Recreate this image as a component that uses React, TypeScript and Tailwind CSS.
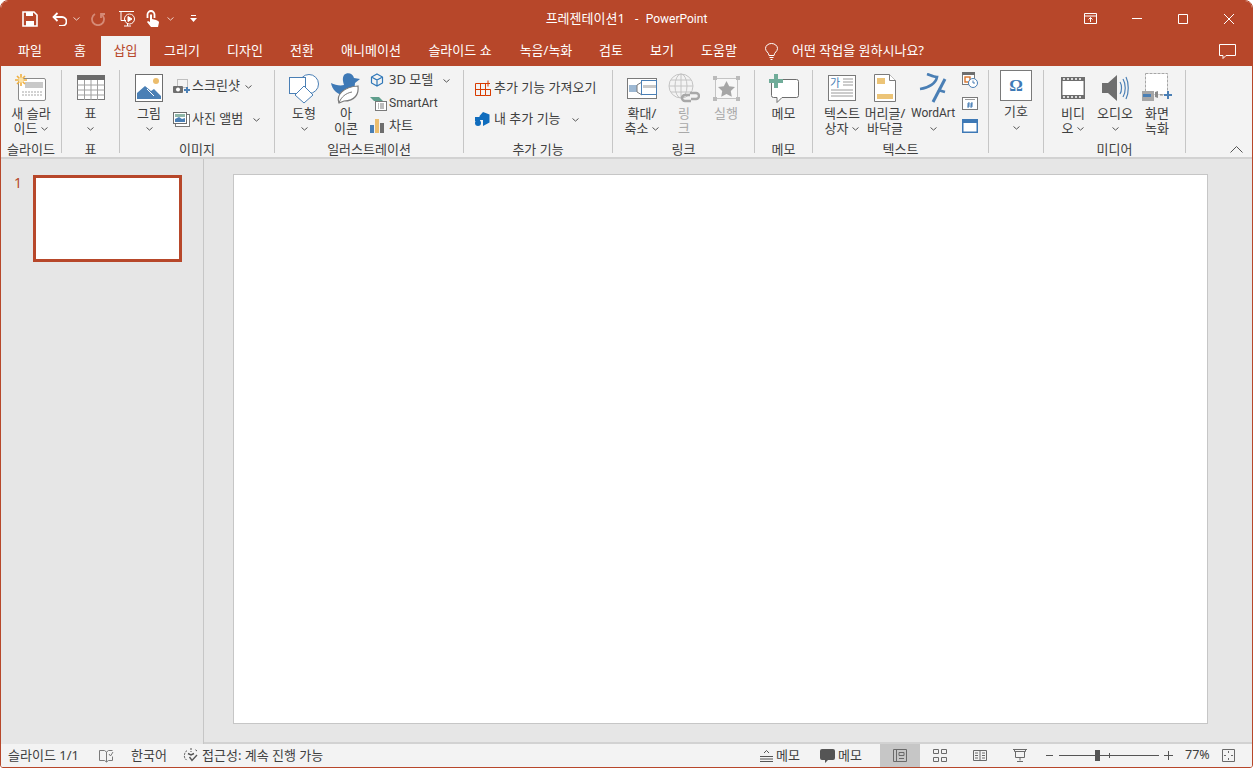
import type { ReactNode } from "react";

const BLUE = "#4a7fb5";

function Chev({ color = "#555" }: { color?: string }) {
  return (
    <svg width="7" height="4" viewBox="0 0 7 4" className="inline-block shrink-0" fill="none" stroke={color}>
      <path d="M.5.5l3 2.6 3-2.6" />
    </svg>
  );
}

function Big({ className, icon, lines, chev, disabled }: { className: string; icon: ReactNode; lines: string[]; chev?: "inline" | "below"; disabled?: boolean }) {
  return (
    <div className={`flex shrink-0 flex-col items-center ${className} ${disabled ? "text-[#a9a9a9]" : ""}`}>
      <div className="flex h-[36px] items-center justify-center">{icon}</div>
      {lines.map((line, i) => (
        <div key={line} className={`flex h-[15px] items-center gap-[4px] whitespace-nowrap leading-[15px] ${line === "WordArt" ? "font-['Roboto',sans-serif] text-[12px]" : ""}`}>
          {line}
          {chev === "inline" && i === lines.length - 1 ? <Chev /> : null}
        </div>
      ))}
      {chev === "below" ? (
        <div className="flex h-[15px] items-center">
          <Chev />
        </div>
      ) : null}
    </div>
  );
}

function Small({ icon, label, chevClass }: { icon: ReactNode; label: string; chevClass?: string }) {
  return (
    <div className="flex h-full items-center whitespace-nowrap">
      <span className="flex w-[19px] shrink-0 items-center">{icon}</span>
      <span className={label === "SmartArt" ? "font-['Roboto',sans-serif] text-[12px]" : ""}>{label}</span>
      {chevClass ? (
        <span className={chevClass}>
          <Chev />
        </span>
      ) : null}
    </div>
  );
}

function Group({ className, label, children }: { className: string; label: string; children: ReactNode }) {
  return (
    <div className={`flex h-full shrink-0 flex-col border-r border-[#c6c6c6] ${className}`}>
      <div className="flex h-[72px]">{children}</div>
      <div className="h-[13px] whitespace-nowrap text-center leading-[18px]">{label}</div>
    </div>
  );
}

const NewSlideIcon = (
  <svg width="32" height="28" viewBox="0 0 32 28">
    <rect x="3.5" y="4.5" width="27" height="22" rx="1.5" fill="#fff" stroke="#8a8a8a" />
    <rect x="10" y="8" width="18" height="6" fill="#c9c9c9" />
    <path d="M7 18h20M7 21h20" stroke="#a5a5a5" strokeDasharray="2 1" />
    <g stroke="#f0b040" strokeWidth="1.6">
      <path d="M6 0v12M0 6h12M2 2l8 8M10 2l-8 8" />
    </g>
    <circle cx="6" cy="6" r="2.6" fill="#fbe3a8" />
  </svg>
);

const TableIcon = (
  <svg width="28" height="26" viewBox="0 0 28 26">
    <rect x=".5" y=".5" width="27" height="24" fill="#fff" stroke="#7a7a7a" />
    <rect x="0" y="0" width="28" height="5" fill="#6b6b6b" />
    <path d="M.5 10h27M.5 15h27M.5 20h27M7.500 5v20M14 5v20M20.500 5v20" stroke="#a0a0a0" />
  </svg>
);

const PictureIcon = (
  <svg width="28" height="28" viewBox="0 0 28 28">
    <rect x=".5" y=".5" width="27" height="27" fill="#fff" stroke="#6e6e6e" />
    <circle cx="21" cy="7" r="3" fill="#ecbd6d" />
    <path d="M2 25v-6l8-7 6 5 3-2 7 7v3z" fill={BLUE} />
    <path d="M12 15l7 7" stroke="#fff" />
  </svg>
);

const ScreenshotIcon = (
  <svg width="17" height="15" viewBox="0 0 17 15">
    <rect x="4.5" y=".5" width="10" height="8" fill="none" stroke="#8a8a8a" strokeDasharray="1 1" />
    <rect x="0" y="7" width="10" height="7" rx="1" fill="#6e6e6e" />
    <circle cx="5" cy="10.5" r="2" fill="#fff" />
    <path d="M14 8v6M11 11h6" stroke={BLUE} strokeWidth="2" />
  </svg>
);

const AlbumIcon = (
  <svg width="17" height="15" viewBox="0 0 17 15">
    <rect x="2.5" y="2.5" width="14" height="12" fill="#fff" stroke="#7a7a7a" />
    <rect x=".5" y=".5" width="13" height="11" fill="#fff" stroke="#6e6e6e" />
    <path d="M2 2h10v3H2z" fill="#8fb6a8" />
    <path d="M2 10V7l4-2 3 2 3-1v4z" fill={BLUE} />
  </svg>
);

const ShapesIcon = (
  <svg width="30" height="31" viewBox="0 0 30 31">
    <circle cx="20" cy="11" r="9.5" fill="#fff" stroke={BLUE} />
    <rect x=".5" y="4.5" width="16" height="16" fill="#fff" stroke={BLUE} />
    <path d="M15 13l9 9-9 8-9-8z" fill="#fff" stroke={BLUE} />
  </svg>
);

const IconsIcon = (
  <svg width="30" height="31" viewBox="0 0 30 31">
    <path d="M13 2c3-3 9-2 10 3l6 1-5 4c0 7-5 12-11 12C6 22 1 16 0 10c4 2 9 3 13 2-1-4-2-7 0-10z" fill="#3e79b6" />
    <path d="M8 30c-3-8 4-16 19-17 1 8-3 15-14 15z" fill="#fff" stroke="#7a7a7a" strokeWidth="1.2" />
    <path d="M8 30c2-6 7-10 13-11" fill="none" stroke="#7a7a7a" />
  </svg>
);

const CubeIcon = (
  <svg width="14" height="14" viewBox="0 0 14 14" fill="none" stroke="#2f77b8" strokeWidth="1.2">
    <path d="M7 1l5.500 3v6L7 13l-5.500-3V4zM1.500 4L7 7l5.500-3M7 7v6" />
  </svg>
);

const SmartArtIcon = (
  <svg width="17" height="15" viewBox="0 0 17 15">
    <path d="M0 1h9l4 4H4z" fill="#5f9e8c" />
    <rect x="5.500" y="5.500" width="11" height="9" fill="#fff" stroke="#7a7a7a" />
    <path d="M8 8h1M8 10h1M8 12h1M10 8h4M10 10h4M10 12h4" stroke="#7a7a7a" />
  </svg>
);

const ChartIcon = (
  <svg width="14" height="14" viewBox="0 0 14 14">
    <rect x="0" y="6" width="4" height="8" fill={BLUE} />
    <rect x="5" y="0" width="4" height="14" fill="#ecbd6d" />
    <rect x="10" y="4" width="4" height="10" fill="#6e6e6e" />
  </svg>
);

const StoreIcon = (
  <svg width="16" height="16" viewBox="0 0 16 16" fill="none" stroke="#d83b01">
    <path d="M.5 3.500h10v12H.5zM.5 9.500h15v6h-5M5.500 3.500v12M15.500 9.500v6M13 .5v6M10 3.500h5" />
  </svg>
);

const MyAddinsIcon = (
  <svg width="15" height="14" viewBox="0 0 15 14">
    <path d="M8 0l6.500 2.500v8L8 14V8H4.500V4z" fill="#0f6cbd" />
    <circle cx="3" cy="11" r="3" fill="#0f6cbd" />
    <rect x="0" y="5" width="5" height="4" fill="#0f6cbd" />
  </svg>
);

const ZoomIcon = (
  <svg width="30" height="24" viewBox="0 0 30 24">
    <rect x=".5" y="2.500" width="29" height="20" fill="#fff" stroke="#7a7a7a" />
    <rect x="2" y="9" width="8" height="7" fill="#9db8d3" />
    <path d="M10 9l5-3v13l-5-3z" fill="#fff" stroke="#7a7a7a" />
    <rect x="14.500" y="4.500" width="15" height="14" fill="#fff" stroke={BLUE} />
    <rect x="16" y="9" width="13" height="3" fill="#c9c9c9" />
  </svg>
);

const LinkIcon = (
  <svg width="32" height="30" viewBox="0 0 32 30" fill="none" stroke="#c4c4c4">
    <circle cx="13" cy="13" r="12" fill="#f3f3f3" />
    <ellipse cx="13" cy="13" rx="6" ry="12" />
    <path d="M1 13h24M3 7h20M3 19h20M13 1v24" />
    <path d="M22 20h6a3 3 0 010 6h-5M23 28h-6a3 3 0 010-6h5" stroke="#a8a8a8" strokeWidth="2.400" />
  </svg>
);

const ActionIcon = (
  <svg width="27" height="25" viewBox="0 0 27 25">
    <rect x="2.500" y="2.500" width="22" height="20" fill="#f7f7f7" stroke="#c4c4c4" />
    <path d="M0 0h4v4H0zM23 0h4v4h-4zM0 21h4v4H0zM23 21h4v4h-4z" fill="#bbb" />
    <path d="M13.500 5l2.700 5.200 5.800.9-4.200 4 1 5.700-5.300-2.700-5.300 2.700 1-5.700-4.200-4 5.800-.9z" fill="#a6a6a6" />
  </svg>
);

const NoteIcon = (
  <svg width="31" height="29" viewBox="0 0 31 29">
    <path d="M3.500 5.500h25a2 2 0 012 2v14a2 2 0 01-2 2H14l-5 5v-5H5.500a2 2 0 01-2-2z" fill="#fff" stroke="#6e6e6e" />
    <path d="M6 0h4v5h5v4h-5v5H6V9H1V5h5z" fill="#70ac99" />
  </svg>
);

const TextBoxIcon = (
  <svg width="28" height="26" viewBox="0 0 28 26">
    <rect x=".5" y=".5" width="27" height="25" fill="#fff" stroke="#7a7a7a" />
    <text x="2" y="12" fontSize="11" fill={BLUE} fontFamily="'Noto Sans CJK KR'">가</text>
    <path d="M15 4h10M15 7h10M15 10h10M3 15h22M3 18h22M3 21h22" stroke="#9a9a9a" />
  </svg>
);

const HeaderIcon = (
  <svg width="22" height="28" viewBox="0 0 22 28">
    <path d="M.5.5h15l6 6v21H.5z" fill="#fff" stroke="#7a7a7a" />
    <path d="M15.500.5v6h6" fill="#fff" stroke="#7a7a7a" />
    <rect x="3" y="4" width="8" height="6" fill="#ecc477" />
    <rect x="3" y="20" width="16" height="5" fill="#ecc477" />
  </svg>
);

const WordArtIcon = (
  <svg width="28" height="30" viewBox="0 0 28 30" fill="none" stroke={BLUE}>
    <path d="M8 1c3 1 7 3 10 3-1 6-8 11-17 12" strokeWidth="2.600" />
    <path d="M26 6L14 29" strokeWidth="3" />
    <path d="M19 17l7 2" strokeWidth="2.600" />
  </svg>
);

const DateIcon = (
  <svg width="16" height="16" viewBox="0 0 16 16">
    <rect x=".5" y=".5" width="12" height="12" fill="#fff" stroke="#7a7a7a" />
    <rect x="0" y="0" width="13" height="3" fill="#6e6e6e" />
    <rect x="3" y="5" width="5" height="5" fill="none" stroke="#d9742b" strokeWidth="1.400" />
    <circle cx="11" cy="11" r="4.500" fill="#fff" stroke={BLUE} />
    <path d="M11 8.500V11h2" stroke={BLUE} fill="none" />
  </svg>
);

const NumberIcon = (
  <svg width="16" height="13" viewBox="0 0 16 13">
    <rect x=".5" y=".5" width="15" height="12" fill="#fff" stroke="#7a7a7a" />
    <path d="M3 2.500h10" stroke="#9a9a9a" />
    <path d="M7 5l-1 6M10 5l-1 6M5 7h6M5 9h6" stroke={BLUE} />
  </svg>
);

const ObjectIcon = (
  <svg width="16" height="14" viewBox="0 0 16 14">
    <rect x=".75" y=".75" width="14.500" height="12.500" fill="#fff" stroke="#3e79b6" strokeWidth="1.500" />
    <rect x="0" y="0" width="16" height="4" fill="#3e79b6" />
  </svg>
);

const OmegaIcon = (
  <div className="flex h-[31px] w-[32px] items-center justify-center border border-[#7a7a7a] bg-white font-['Liberation_Serif',serif] text-[17px] font-bold text-[#3e79b6]">
    Ω
  </div>
);

const VideoIcon = (
  <svg width="24" height="24" viewBox="0 0 24 24">
    <rect x="0" y="1" width="24" height="22" fill="#6e6e6e" />
    <rect x="1.500" y="5" width="21" height="14" fill="#fff" />
    <path d="M2 3h2M6 3h2M10 3h2M14 3h2M18 3h2M2 21h2M6 21h2M10 21h2M14 21h2M18 21h2" stroke="#fff" strokeWidth="1.500" />
  </svg>
);

const AudioIcon = (
  <svg width="27" height="28" viewBox="0 0 27 28" fill="none">
    <path d="M0 9h6l9-8v26l-9-8H0z" fill="#6e6e6e" />
    <path d="M18 8c2 3 2 9 0 12M21 5c3 5 3 13 0 18M24 3c3 6 3 16 0 22" stroke={BLUE} strokeWidth="1.200" />
  </svg>
);

const RecordIcon = (
  <svg width="30" height="30" viewBox="0 0 30 30">
    <rect x="3.500" y=".5" width="22" height="21" fill="#fff" stroke="#a6a6a6" strokeDasharray="3 1" />
    <rect x="0" y="18" width="12" height="10" fill="#a6a6a6" />
    <path d="M1 21h8v3H1z" fill={BLUE} />
    <path d="M13 19l3-1v7l-3-1z" fill="#8a8a8a" />
    <path d="M18 22h3" stroke="#8a8a8a" />
    <path d="M26 18v8M22 22h8" stroke={BLUE} strokeWidth="2" />
  </svg>
);

const tabs: [string, string][] = [
  ["파일", "w-[58px]"],
  ["홈", "w-[42px]"],
  ["삽입", "w-[49px]"],
  ["그리기", "w-[64px]"],
  ["디자인", "w-[62px]"],
  ["전환", "w-[52px]"],
  ["애니메이션", "w-[86px]"],
  ["슬라이드 쇼", "w-[92px]"],
  ["녹음/녹화", "w-[80px]"],
  ["검토", "w-[50px]"],
  ["보기", "w-[52px]"],
  ["도움말", "w-[62px]"],
];

function TitleBar() {
  return (
    <div className="grid h-[35px] grid-cols-[1fr_auto_1fr] items-center bg-[#b7472a] text-white">
      <div className="flex items-center pl-[21px]">
        <svg width="16" height="16" viewBox="0 0 16 16" fill="none">
          <path d="M1 1h11l3 3v11H1z" stroke="#fff" strokeWidth="1.600" />
          <rect x="4" y="1" width="7" height="4" fill="#fff" />
          <rect x="4" y="10" width="8" height="5" fill="#fff" />
        </svg>
        <svg className="ml-[14px]" width="15" height="14" viewBox="0 0 15 14" fill="none" stroke="#fff" strokeWidth="1.800">
          <path d="M5.500 1L1.500 5l4 4M2 5h8a4.500 4.500 0 010 9H7" />
        </svg>
        <span className="ml-[6px]"><Chev color="#eccfc6" /></span>
        <svg className="ml-[11px]" width="14" height="14" viewBox="0 0 14 14" fill="none" stroke="#d58a76" strokeWidth="1.800">
          <path d="M4 2a6 6 0 106 0M10 6V2h4" />
        </svg>
        <svg className="ml-[14px]" width="17" height="17" viewBox="0 0 17 17" fill="none" stroke="#fff">
          <path d="M0 1.500h15M2 1.500v9h5M5 16h7M8.500 13v3" />
          <circle cx="10.500" cy="9" r="5" />
          <path d="M9 6.500l4 2.500-4 2.500z" fill="#fff" />
        </svg>
        <svg className="ml-[10px]" width="13" height="17" viewBox="0 0 13 17">
          <path d="M1.500 8V4.500a3.500 3.500 0 017 0V8" fill="none" stroke="#fff" strokeWidth="1.800" />
          <path d="M4 4.500h2V9l4 1c1.500.5 3 1 3 2.500L12 17H5L1 12l1-1 2 1z" fill="#fff" />
        </svg>
        <span className="ml-[8px]"><Chev color="#eccfc6" /></span>
        <svg className="ml-[16px]" width="7" height="7" viewBox="0 0 7 7">
          <path d="M1 0h5v1H1zM0 3h7L3.500 7z" fill="#fff" />
        </svg>
      </div>
      <div className="flex items-center whitespace-pre text-[13px]">
        <span>프레젠테이션1</span>
        <span className="ml-[10px] text-[12px]">-</span>
        <span className="ml-[7px] font-['Roboto',sans-serif] text-[12px]">PowerPoint</span>
      </div>
      <div className="flex items-center justify-end">
        <svg className="mr-[35px]" width="13" height="11" viewBox="0 0 13 11" fill="none" stroke="#fff">
          <path d="M.5.5h12v10H.5zM.5 3h12M6.500 9V4.500M4.500 6.500l2-2 2 2" />
        </svg>
        <svg className="mr-[36px]" width="10" height="1" viewBox="0 0 10 1"><path d="M0 .5h10" stroke="#fff" /></svg>
        <svg className="mr-[36px]" width="10" height="10" viewBox="0 0 10 10" fill="none" stroke="#fff"><path d="M.5.5h9v9h-9z" /></svg>
        <svg className="mr-[18px]" width="10" height="10" viewBox="0 0 10 10" fill="none" stroke="#fff"><path d="M0 0l10 10M10 0L0 10" /></svg>
      </div>
    </div>
  );
}

function TabRow() {
  return (
    <div className="flex h-[30px] items-center bg-[#b7472a] text-white">
      {tabs.map(([name, width]) => (
        <div
          key={name}
          className={`flex h-full shrink-0 items-center justify-center whitespace-nowrap ${width} ${name === "삽입" ? "bg-[#f3f3f3] text-[#b7472a]" : ""}`}
        >
          {name}
        </div>
      ))}
      <svg className="ml-[15px]" width="13" height="17" viewBox="0 0 13 17" fill="none" stroke="#fff">
        <path d="M4 12.500c0-3-3.500-4-3.500-7a6 5 0 0112 0c0 3-3.500 4-3.500 7zM4.500 14.500h4M5.500 16.500h2" />
      </svg>
      <div className="ml-[14px] whitespace-nowrap">어떤 작업을 원하시나요?</div>
      <svg className="ml-auto mr-[16px]" width="17" height="15" viewBox="0 0 17 15" fill="none" stroke="#fff">
        <path d="M.5.5h16v11H7l-3 3v-3H.5z" />
      </svg>
    </div>
  );
}

function Ribbon() {
  return (
    <div className="relative flex h-[93px] border-b-2 border-[#d2d2d2] bg-[#f3f3f3] py-[4px] text-[#404040]">
      <Group className="w-[61px] justify-between" label="슬라이드">
        <Big className="w-full" icon={NewSlideIcon} lines={["새 슬라", "이드"]} chev="inline" />
      </Group>
      <Group className="w-[58px]" label="표">
        <Big className="w-full" icon={TableIcon} lines={["표"]} chev="below" />
      </Group>
      <Group className="w-[155px]" label="이미지">
        <div className="flex pl-[13px]">
          <Big className="w-[32px]" icon={PictureIcon} lines={["그림"]} chev="below" />
          <div className="ml-[8px] flex flex-col gap-[11px] pt-[5px]">
            <div className="h-[22px]"><Small icon={ScreenshotIcon} label="스크린샷" chevClass="ml-[5px]" /></div>
            <div className="h-[22px]"><Small icon={AlbumIcon} label="사진 앨범" chevClass="ml-[10px]" /></div>
          </div>
        </div>
      </Group>
      <Group className="w-[189px]" label="일러스트레이션">
        <div className="flex pl-[13px]">
          <Big className="w-[32px]" icon={ShapesIcon} lines={["도형"]} chev="below" />
          <Big className="ml-[10px] w-[32px]" icon={IconsIcon} lines={["아", "이콘"]} />
          <div className="ml-[8px] flex flex-col gap-[3px]">
            <div className="h-[20px]"><Small icon={CubeIcon} label="3D 모델" chevClass="ml-[10px]" /></div>
            <div className="h-[20px]"><Small icon={SmartArtIcon} label="SmartArt" /></div>
            <div className="h-[20px]"><Small icon={ChartIcon} label="차트" /></div>
          </div>
        </div>
      </Group>
      <Group className="w-[149px]" label="추가 기능">
        <div className="flex flex-col gap-[9px] pl-[11px] pt-[7px]">
          <div className="h-[22px]"><Small icon={StoreIcon} label="추가 기능 가져오기" /></div>
          <div className="h-[22px]"><Small icon={MyAddinsIcon} label="내 추가 기능" chevClass="ml-[11px]" /></div>
        </div>
      </Group>
      <Group className="w-[142px]" label="링크">
        <div className="flex pl-[7px]">
          <Big className="w-[44px]" icon={ZoomIcon} lines={["확대/", "축소"]} chev="inline" />
          <Big className="ml-[5px] w-[30px]" icon={LinkIcon} lines={["링", "크"]} disabled />
          <Big className="ml-[7px] w-[40px]" icon={ActionIcon} lines={["실행"]} disabled />
        </div>
      </Group>
      <Group className="w-[58px]" label="메모">
        <Big className="w-full" icon={NoteIcon} lines={["메모"]} />
      </Group>
      <Group className="w-[176px]" label="텍스트">
        <div className="flex pl-[8px]">
          <Big className="w-[42px]" icon={TextBoxIcon} lines={["텍스트", "상자"]} chev="inline" />
          <Big className="ml-[1px] w-[42px]" icon={HeaderIcon} lines={["머리글/", "바닥글"]} />
          <Big className="ml-[2px] w-[50px]" icon={WordArtIcon} lines={["WordArt"]} chev="below" />
          <div className="ml-[4px] flex w-[16px] flex-col gap-[9px] pt-[2px]">
            {DateIcon}
            {NumberIcon}
            {ObjectIcon}
          </div>
        </div>
      </Group>
      <Group className="w-[55px]" label="">
        <div className="flex w-full flex-col items-center">
          {OmegaIcon}
          <div className="mt-[3px] leading-[15px]">기호</div>
          <div className="mt-[4px] flex h-[10px] items-center"><Chev /></div>
        </div>
      </Group>
      <Group className="w-[142px]" label="미디어">
        <div className="flex gap-[2px] pl-[9px]">
          <Big className="w-[40px]" icon={VideoIcon} lines={["비디", "오"]} chev="inline" />
          <Big className="w-[40px]" icon={AudioIcon} lines={["오디오"]} chev="below" />
          <Big className="w-[40px]" icon={RecordIcon} lines={["화면", "녹화"]} />
        </div>
      </Group>
      <svg className="absolute bottom-[4px] right-[9px]" width="13" height="7" viewBox="0 0 13 7" fill="none" stroke="#555">
        <path d="M.5 6.500l6-6 6 6" />
      </svg>
    </div>
  );
}

function StatusBar() {
  return (
    <div className="flex h-[23px] items-center bg-[#f3f3f3] text-[#404040]">
      <div className="ml-[7px] w-[91px] whitespace-nowrap">슬라이드 1/1</div>
      <svg width="15" height="14" viewBox="0 0 15 14" fill="none" stroke="#7a7a7a">
        <path d="M.5 1.500h5l2 1.500v10l-2-1.500h-5zM7.500 3l2-1.500h4M7.500 13l2-1.500h4v-4M10 5l1.500 2L14 3" />
      </svg>
      <div className="ml-[17px] w-[52px] whitespace-nowrap">한국어</div>
      <svg width="17" height="15" viewBox="0 0 17 15" fill="none" stroke="#555">
        <path d="M4 2.500a6.500 6.500 0 00-2 8l2 2M14 3l-2-1.500M8 0v4" strokeDasharray="2 1" />
        <path d="M5 5.500l3 1.500 3-1.500M6.500 9l2.500 3.500L14 7" strokeWidth="1.400" />
      </svg>
      <div className="ml-[2px] whitespace-nowrap">접근성: 계속 진행 가능</div>
      <div className="ml-auto flex h-full items-center">
        <svg width="13" height="12" viewBox="0 0 13 12" fill="none" stroke="#555">
          <path d="M4 3l2.500-2.500L9 3M0 6.500h13M0 9h13M0 11.500h13" />
        </svg>
        <div className="ml-[3px] w-[44px] whitespace-nowrap">메모</div>
        <svg width="15" height="14" viewBox="0 0 15 14">
          <path d="M2 0h11a2 2 0 012 2v7a2 2 0 01-2 2H8l-3 3v-3H2a2 2 0 01-2-2V2a2 2 0 012-2z" fill="#555" />
        </svg>
        <div className="ml-[3px] w-[42px] whitespace-nowrap">메모</div>
        <div className="flex h-full w-[40px] items-center justify-center bg-[#c6c6c6]">
          <svg width="14" height="13" viewBox="0 0 14 13" fill="none" stroke="#6a6a6a">
            <path d="M.5.5h13v12H.5zM3.500.5v12M6 3.500h5v3H6zM6 9.500h5" />
          </svg>
        </div>
        <svg className="ml-[13px]" width="14" height="13" viewBox="0 0 14 13" fill="none" stroke="#6a6a6a">
          <path d="M.5.500h5v4h-5zM8.500.500h5v4h-5zM.5 8.500h5v4h-5zM8.500 8.500h5v4h-5z" />
        </svg>
        <svg className="ml-[26px]" width="14" height="13" viewBox="0 0 14 13" fill="none" stroke="#6a6a6a">
          <path d="M.5 1.500h13v10H.5zM7 1.500v10M2 4h3M2 6.500h3M2 9h3M9 4h3M9 6.500h3M9 9h3" />
        </svg>
        <svg className="ml-[26px]" width="14" height="13" viewBox="0 0 14 13" fill="none" stroke="#6a6a6a">
          <path d="M0 .5h14M1.500 .5v2h11v-2M2.500 2.500v6h9v-6M7 8.500v3M4 12.500h6" />
        </svg>
        <div className="ml-[19px] h-px w-[7px] bg-[#555]" />
        <div className="relative ml-[6px] h-px w-[100px] bg-[#555]">
          <div className="absolute left-[36px] top-[-5px] h-[11px] w-[5px] bg-[#555]" />
          <div className="absolute left-[50px] top-[-2px] h-[5px] w-px bg-[#555]" />
        </div>
        <svg className="ml-[5px]" width="9" height="9" viewBox="0 0 9 9" stroke="#555"><path d="M0 4.500h9M4.500 0v9" /></svg>
        <div className="ml-[12px] w-[37px] whitespace-nowrap text-[12.5px]">77%</div>
        <svg width="13" height="13" viewBox="0 0 13 13" fill="none" stroke="#6a6a6a" className="mr-[17px]">
          <path d="M.5.5h12v12H.5zM6.500 2v2M6.500 9v2M2 6.500h2M9 6.500h2" />
        </svg>
      </div>
    </div>
  );
}

export default function App() {
  return (
    <div className="h-[768px] w-[1253px] overflow-hidden bg-white font-['Noto_Sans','Noto_Sans_CJK_KR',sans-serif] text-[13px]">
      <div className="flex h-full flex-col overflow-hidden rounded-t-[8px] rounded-b-[3px] border border-[#b7472a]">
        <TitleBar />
        <TabRow />
        <Ribbon />
        <div className="flex min-h-0 flex-1 bg-[#e6e6e6]">
          <div className="flex w-[203px] shrink-0 border-r border-[#c6c6c6] pl-[13px] pt-[16px]">
            <div className="w-[19px] text-[14px] leading-[15px] text-[#b7472a]">1</div>
            <div className="h-[87px] w-[149px] border-[3px] border-[#b7472a] bg-white" />
          </div>
          <div className="flex min-w-0 flex-1 flex-col">
            <div className="flex flex-1 border-b-2 border-[#d2d2d2] pb-[18px] pl-[29px] pr-[44px] pt-[15px]">
              <div className="flex-1 border border-[#c6c6c6] bg-white" />
            </div>
          </div>
        </div>
        <StatusBar />
      </div>
    </div>
  );
}
